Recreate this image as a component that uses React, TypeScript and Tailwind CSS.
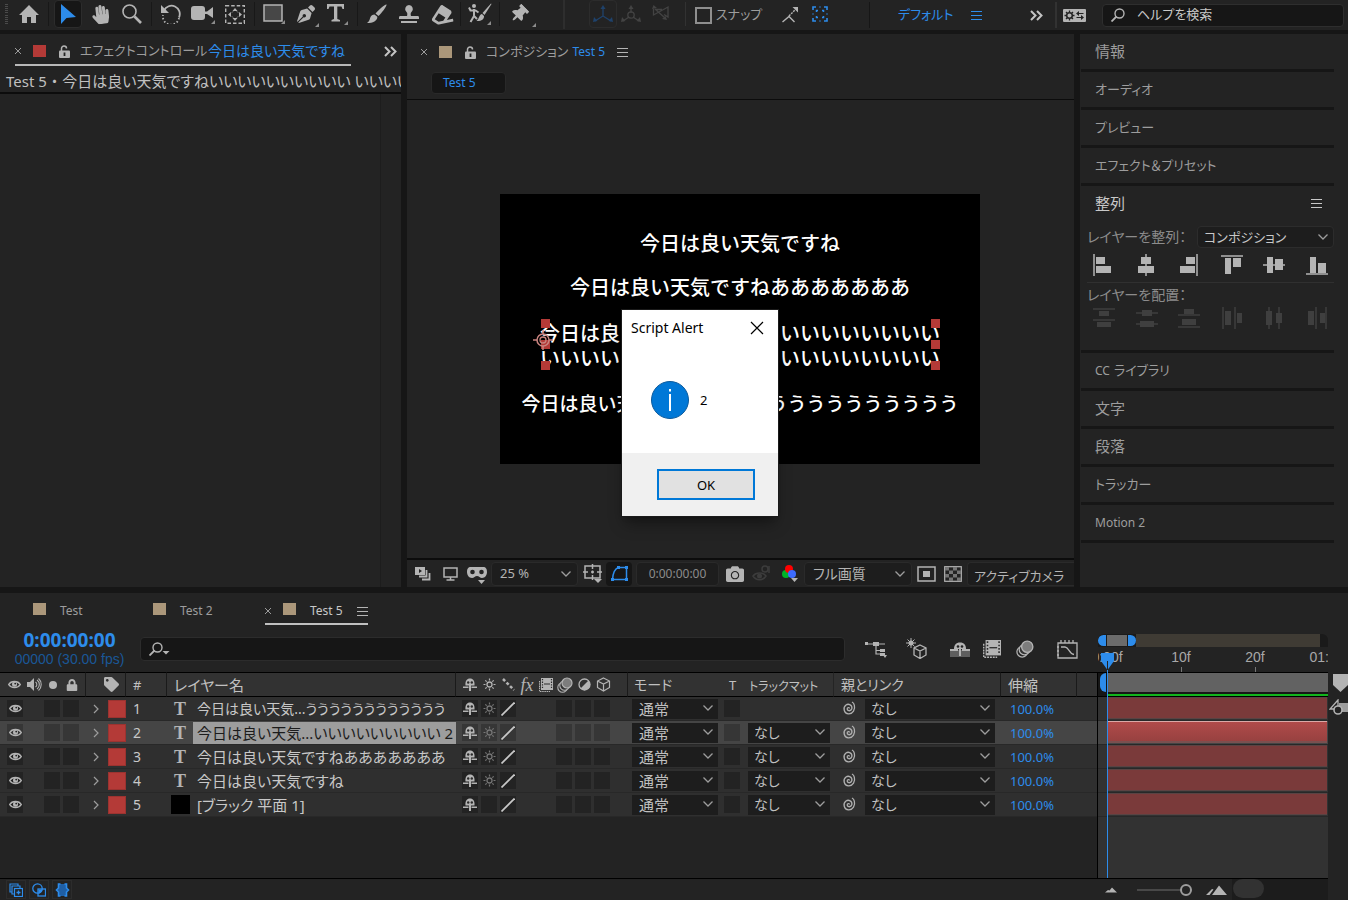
import type { ReactNode } from "react";
import {
  FaCamera,
  FaEraser,
  FaHandPaper,
  FaLock,
  FaPenNib,
  FaTag,
  FaThumbtack,
} from "react-icons/fa";

interface Layer {
  id: number;
  name: string;
  kind: "text" | "solid";
  selected?: boolean;
  compact?: boolean;
  matte: boolean;
}

const layers: Layer[] = [
  { id: 1, name: "今日は良い天気...うううううううううううう", kind: "text", compact: true, matte: false },
  { id: 2, name: "今日は良い天気...いいいいいいいいい 2", kind: "text", selected: true, matte: true },
  { id: 3, name: "今日は良い天気ですねあああああああ", kind: "text", matte: true },
  { id: 4, name: "今日は良い天気ですね", kind: "text", matte: true },
  { id: 5, name: "[ブラック 平面 1]", kind: "solid", matte: true },
];

interface SvgProps {
  w: number;
  h: number;
  className?: string;
  children: ReactNode;
}

function Svg({ w, h, className = "", children }: SvgProps) {
  return (
    <svg
      width={w}
      height={h}
      viewBox={`0 0 ${w} ${h}`}
      fill="none"
      stroke="currentColor"
      aria-hidden="true"
      className={`shrink-0 ${className}`}
    >
      {children}
    </svg>
  );
}

/* ---------- icons ---------- */

function ChevronDown({ className = "" }: { className?: string }) {
  return (
    <Svg w={12} h={8} className={className}>
      <path d="M1.5 1.5 6 6l4.500-4.500" strokeWidth="1.300" />
    </Svg>
  );
}

function MenuIcon({ className = "" }: { className?: string }) {
  return (
    <Svg w={11} h={11} className={className}>
      <path d="M0 1.500h11M0 5.500h11M0 9.500h11" />
    </Svg>
  );
}

function MoreIcon() {
  return (
    <Svg w={13} h={11} className="text-[#c4c4c4]">
      <path d="m1 1 4.500 4.500L1 10M7 1l4.500 4.500L7 10" strokeWidth="2" />
    </Svg>
  );
}

function CloseIcon() {
  return (
    <Svg w={6} h={6} className="text-[#9d9d9d]">
      <path d="m0 0 6 6M6 0 0 6" />
    </Svg>
  );
}

function UnlockIcon() {
  return (
    <Svg w={11} h={13} className="text-[#b4b4b4]">
      <path d="M2.500 6V3.500a2.500 2.500 0 0 1 5 0" strokeWidth="1.500" />
      <rect x="0" y="5.500" width="11" height="7.500" rx="1" fill="currentColor" stroke="none" />
      <path d="M5.500 7.500v3.500" stroke="#232323" strokeWidth="1.800" />
    </Svg>
  );
}

function HomeIcon() {
  return (
    <Svg w={20} h={19}>
      <path d="M10 0 0 10h3v8h5v-6h4v6h5v-8h3z" fill="currentColor" stroke="none" />
    </Svg>
  );
}

function SelectIcon() {
  return (
    <Svg w={16} h={20} className="text-[#2d8ceb]">
      <path d="M1 0v20l5.500-6L16 13z" fill="currentColor" stroke="none" />
    </Svg>
  );
}

function ZoomIcon() {
  return (
    <Svg w={20} h={20}>
      <circle cx="7.500" cy="7.500" r="6.500" strokeWidth="1.600" />
      <path d="m12.500 12.500 6.500 6.500" strokeWidth="2.600" />
    </Svg>
  );
}

function RotateIcon() {
  return (
    <Svg w={20} h={20}>
      <path d="M3 6.500a8 8 0 0 1 15 7" strokeWidth="1.800" />
      <path d="M18 14a8 8 0 0 1-16-3" strokeWidth="1.800" strokeDasharray="1.500 2" />
      <path d="M0 1v8h8z" fill="currentColor" stroke="none" />
    </Svg>
  );
}

function VideoIcon() {
  return (
    <Svg w={24} h={20}>
      <rect x="0" y="2" width="14" height="14" rx="3" fill="currentColor" stroke="none" />
      <path d="M13 7.500 16 7.500 22 3v11l-6-4h-3z" fill="currentColor" stroke="none" />
      <path d="M24 16v4h-4z" fill="#8c8c8c" stroke="none" />
    </Svg>
  );
}

function PanBehindIcon() {
  return (
    <Svg w={20} h={19}>
      <rect x="0.700" y="0.700" width="18.600" height="17.600" strokeWidth="1.400" strokeDasharray="3.500 2" />
      <path
        d="M10 3l2.500 3h-5zM10 16l2.500-3h-5zM3 9.500l3-2.500v5zM17 9.500 14 7v5z"
        fill="currentColor"
        stroke="none"
      />
      <path d="M7 7.500l1-1M13 7.500l-1-1M7 11.500l1 1M13 11.500l-1 1" />
    </Svg>
  );
}

function ShapeIcon() {
  return (
    <Svg w={22} h={20}>
      <rect x="1" y="1" width="18" height="16" fill="#474747" strokeWidth="1.500" />
      <path d="M22 16v4h-4z" fill="#8c8c8c" stroke="none" />
    </Svg>
  );
}

function PenIcon() {
  return (
    <div className="relative">
      <FaPenNib size={18} />
      <Svg w={4} h={4} className="absolute -right-1 -bottom-1 text-[#8c8c8c]">
        <path d="M4 0v4H0z" fill="currentColor" stroke="none" />
      </Svg>
    </div>
  );
}

function TypeIcon() {
  return (
    <Svg w={22} h={21}>
      <path d="M0 0h17v5h-1.500l-1-2.500h-4.200v12.500l2.700 1v1.500H4.500V16L7 15V2.500H2.500L1.500 5H0z" fill="currentColor" stroke="none" />
      <path d="M21 17v4h-4z" fill="#8c8c8c" stroke="none" />
    </Svg>
  );
}

function BrushIcon() {
  return (
    <Svg w={20} h={20}>
      <path
        d="M19.500 0.500c.8.600-4.500 8.500-8 11.500L8.500 9.500C11.500 6 18 0 19.500.5zM7.500 10.500l2.800 2.300c.3 3.500-4 6.200-10.300 6.200 2.500-1.500 2.500-3 3.200-5.200.8-2.300 2.500-3.300 4.300-3.300z"
        fill="currentColor"
        stroke="none"
      />
    </Svg>
  );
}

function StampIcon() {
  return (
    <Svg w={20} h={19}>
      <path
        d="M10 0a4 4 0 0 1 2.500 7c-1 1-1 2.500-.5 4h6.500c1 0 1.500.5 1.500 1.500V14H0v-1.500C0 11.500.5 11 1.500 11H8c.5-1.500.5-3-.5-4A4 4 0 0 1 10 0zM2 16h16v2H2z"
        fill="currentColor"
        stroke="none"
      />
    </Svg>
  );
}

function RotoIcon() {
  return (
    <Svg w={24} h={22}>
      <circle cx="6" cy="3" r="2" fill="currentColor" stroke="none" />
      <path d="M1 4.500 2.500 7.500h5l3 2M6 6v7l-3.500 6M6 13l3 3" strokeWidth="2" />
      <path d="M23 0.500 14.500 10l2 2L23.500 1zM14 11c-3 .5-2.500 4.500-5.500 7 4 .5 8-1.500 7.500-5z" fill="currentColor" stroke="none" />
      <path d="M23 18v4h-4z" fill="#8c8c8c" stroke="none" />
    </Svg>
  );
}

function PinIcon() {
  return (
    <div className="relative">
      <FaThumbtack size={18} className="rotate-45" />
      <Svg w={4} h={4} className="absolute -right-2 -bottom-1 text-[#8c8c8c]">
        <path d="M4 0v4H0z" fill="currentColor" stroke="none" />
      </Svg>
    </div>
  );
}

function LocalAxisIcon() {
  return (
    <Svg w={20} h={18} className="text-[#1f426b]">
      <path d="M10 2v9L2 16M10 11l8 5" strokeWidth="1.300" />
      <path d="M10 0l2.500 4h-5zM0 17l1-5 3.500 4zM20 17l-1-5-3.500 4z" fill="currentColor" stroke="none" />
    </Svg>
  );
}

function WorldAxisIcon() {
  return (
    <Svg w={20} h={18} className="text-[#434343]">
      <path d="M10 2v6M8 12l-6 4M12 12l6 4" strokeWidth="1.300" />
      <circle cx="10" cy="10" r="3.200" strokeWidth="1.300" />
      <path d="M10 0l2.500 4h-5zM0 17l1-5 3.500 4zM20 17l-1-5-3.500 4z" fill="currentColor" stroke="none" />
    </Svg>
  );
}

function ViewAxisIcon() {
  return (
    <Svg w={18} h={18} className="text-[#434343]">
      <path d="M1.500 4v6L16 2v10l-4-2.500M3 4l10 9M4 4.500h6" strokeWidth="1.300" />
      <path d="M0 4l1.500-4L5 3zM15 15l-1.500-4L10 14z" fill="currentColor" stroke="none" />
    </Svg>
  );
}

function SnapEdgeIcon() {
  return (
    <Svg w={17} h={17} className="text-[#b4b4b4]">
      <path d="M0.500 16 7 10.500 12.500 16" strokeWidth="1.400" />
      <path d="M7 10l6-6" strokeWidth="1.400" strokeDasharray="2 1" />
      <path d="M10.500 1H16v5.500z" fill="currentColor" stroke="none" />
    </Svg>
  );
}

function SnapBoxIcon() {
  return (
    <Svg w={16} h={16} className="text-[#2d8ceb]">
      <path d="M1 4V1h3M12 1h3v3M15 12v3h-3M4 15H1v-3" strokeWidth="1.600" />
      <path d="M4.500 6V4.500H6M10 4.500h1.500V6M11.500 10v1.500H10M6 11.500H4.500V10M7.500 1h1M7.500 15h1M1 7.500v1M15 7.500v1" strokeWidth="1.500" />
    </Svg>
  );
}

function WorkspaceIcon() {
  return (
    <Svg w={23} h={13}>
      <rect x="0" y="0" width="23" height="13" rx="1" fill="#b4b4b4" stroke="none" />
      <circle cx="6.500" cy="6.500" r="2.800" stroke="#232323" strokeWidth="1.500" />
      <path d="M6.500 1.500v2M6.500 9.500v2M1.500 6.500h2M9.500 6.500h2M3 3l1.300 1.300M8.700 8.700 10 10M10 3 8.700 4.300M3 10l1.300-1.300" stroke="#232323" strokeWidth="1.300" />
      <path d="M14 4.500h6.500M13.500 8.500H20" stroke="#232323" strokeWidth="1.200" />
      <path d="M16 2v5l-3-2.500zM18 6v5l3-2.500z" fill="#232323" stroke="none" />
    </Svg>
  );
}

function SearchIcon({ menu = false }: { menu?: boolean }) {
  return (
    <Svg w={menu ? 21 : 14} h={14} className="text-[#b4b4b4]">
      <circle cx="8.500" cy="5.500" r="4.500" strokeWidth="1.400" />
      <path d="M5.500 8.500 0.500 13.500" strokeWidth="1.800" />
      {menu && <path d="M13.500 9h7L17 12.500z" fill="currentColor" stroke="none" />}
    </Svg>
  );
}

function EyeIcon() {
  return (
    <Svg w={13} h={9}>
      <path d="M0.700 4.500C3 .5 10 .5 12.300 4.500 10 8.500 3 8.500.7 4.500z" strokeWidth="1.500" />
      <circle cx="6.500" cy="4.300" r="2.500" fill="currentColor" stroke="none" />
      <circle cx="7.200" cy="3.600" r="0.900" fill="#222" stroke="none" />
    </Svg>
  );
}

function SpeakerIcon() {
  return (
    <Svg w={15} h={13}>
      <path d="M0 4h3l4-4v13L3 9H0z" fill="currentColor" stroke="none" />
      <path d="M8.500 4a3 3 0 0 1 0 5M10 2a5.500 5.500 0 0 1 0 9M11.500.5a8 8 0 0 1 0 12" strokeWidth="1.100" />
    </Svg>
  );
}

function ShyIcon() {
  return (
    <Svg w={14} h={13}>
      <path
        d="M2.500 7.500C2 3 4 .5 7 .5s5 2.500 4.500 7zM0 8.500h5.500V10H0zM8.500 8.500H14V10H8.500zM6 7h2v6H6z"
        fill="currentColor"
        stroke="none"
      />
      <circle cx="5.200" cy="4.500" r="1.200" fill="#2a2a2a" stroke="none" />
      <circle cx="8.800" cy="4.500" r="1.200" fill="#2a2a2a" stroke="none" />
    </Svg>
  );
}

function SunIcon({ className = "" }: { className?: string }) {
  return (
    <Svg w={13} h={13} className={className}>
      <circle cx="6.500" cy="6.500" r="2.500" strokeWidth="1.300" />
      <path d="M6.500 0.500v2M6.500 10.500v2M.5 6.500h2M10.500 6.500h2M2.300 2.300l1.400 1.400M9.300 9.300l1.400 1.400M10.700 2.300 9.300 3.700M2.300 10.700l1.400-1.400" strokeWidth="1.200" />
    </Svg>
  );
}

function QualityIcon() {
  return (
    <Svg w={14} h={14} className="text-[#c8c8c8]">
      <path d="M0.500 13.500l13-13" strokeWidth="1.700" />
    </Svg>
  );
}

function FilmIcon({ size = 14 }: { size?: number }) {
  return (
    <svg width={size} height={size} viewBox="0 0 14 14" fill="none" stroke="currentColor" aria-hidden="true" className="shrink-0">
      <path d="M0.500 3v10.500H11" strokeWidth="1.200" strokeDasharray="1.500 .7" />
      <rect x="2" y="0" width="12" height="12" fill="currentColor" stroke="none" />
      <path d="M3.500 1v10M12.500 1v10" stroke="#2a2a2a" strokeWidth="1.200" strokeDasharray="1.300 1.300" />
      <path d="M5 6h6" stroke="#2a2a2a" />
    </svg>
  );
}

function BlurIcon({ size = 16 }: { size?: number }) {
  return (
    <svg width={size} height={size} viewBox="0 0 16 16" fill="none" stroke="currentColor" aria-hidden="true" className="shrink-0">
      <circle cx="5.500" cy="10.500" r="4.700" strokeWidth="1.100" />
      <circle cx="7.500" cy="8.500" r="4.700" fill="#333" strokeWidth="1.100" />
      <circle cx="10" cy="6" r="5" fill="#7d7d7d" strokeWidth="1.200" />
    </svg>
  );
}

function AdjustIcon() {
  return (
    <Svg w={13} h={13}>
      <circle cx="6.500" cy="6.500" r="5.500" strokeWidth="1.300" />
      <path d="M10.500 2.500a5.600 5.600 0 0 1-8 8z" fill="currentColor" stroke="none" />
    </Svg>
  );
}

function CubeIcon() {
  return (
    <Svg w={15} h={15}>
      <path d="M7.500 1 13.500 4v6.500l-6 3.500-6-3.500V4zM1.500 4l6 3 6-3M7.500 7v7" strokeWidth="1.200" />
    </Svg>
  );
}

function SpiralIcon() {
  return (
    <Svg w={15} h={15} className="text-[#b0b0b0]">
      <path
        d="M8.500 7.500c0-1.500-2.500-1-2.300.7.200 2 3.800 2.300 4.600-.4C11.700 4 7.500 2.300 5 4 1.500 6.500 3 12.500 7.500 12.800c4.500.2 7-4.300 5.800-8.800C13 2.500 12 1.500 11 1"
        strokeWidth="1.300"
      />
    </Svg>
  );
}

function MountainIcon({ big = false }: { big?: boolean }) {
  return big ? (
    <Svg w={21} h={10} className="text-[#b4b4b4]">
      <path d="M6 10 13 0.500 21 10zM0 10l6-6 1.500.5L3.500 10z" fill="currentColor" stroke="none" />
    </Svg>
  ) : (
    <Svg w={12} h={6} className="text-[#b4b4b4]">
      <path d="M0 5.500 3 3l1.500.5L7 .5l5 5z" fill="currentColor" stroke="none" />
    </Svg>
  );
}

/* ---------- top tool bar ---------- */

function Tool({ label, children, className = "w-8" }: { label: string; children: ReactNode; className?: string }) {
  return (
    <button type="button" aria-label={label} className={`flex h-7 shrink-0 items-center justify-center text-[#b4b4b4] ${className}`}>
      {children}
    </button>
  );
}

function Divider() {
  return <div className="mx-[3px] h-6 w-px shrink-0 bg-[#181818]" />;
}

function TopBar() {
  return (
    <header className="flex h-[30px] shrink-0 items-center overflow-hidden bg-[#232323] pb-[2px]">
      <div className="mr-[5px] ml-[5px] flex h-5 w-[3px] shrink-0 flex-col justify-between">
        {Array.from({ length: 10 }, (_, i) => (
          <div key={i} className="h-px bg-[#4a4a4a]" />
        ))}
      </div>
      <Tool label="ホーム"><HomeIcon /></Tool>
      <Divider />
      <button type="button" aria-label="選択" className="mx-[2px] flex h-7 w-7 shrink-0 items-center justify-center rounded border border-[#2c2c2c] bg-[#161616]">
        <SelectIcon />
      </button>
      <Tool label="手のひら"><FaHandPaper size={19} className="-rotate-6" /></Tool>
      <Tool label="ズーム"><ZoomIcon /></Tool>
      <Divider />
      <Tool label="回転"><RotateIcon /></Tool>
      <Tool label="カメラ"><VideoIcon /></Tool>
      <Tool label="アンカーポイント"><PanBehindIcon /></Tool>
      <Divider />
      <Tool label="長方形"><ShapeIcon /></Tool>
      <Tool label="ペン"><PenIcon /></Tool>
      <Tool label="横書き文字"><TypeIcon /></Tool>
      <Divider />
      <Tool label="ブラシ"><BrushIcon /></Tool>
      <Tool label="コピースタンプ"><StampIcon /></Tool>
      <Tool label="消しゴム"><FaEraser size={21} className="-rotate-12" /></Tool>
      <Divider />
      <Tool label="ロトブラシ"><RotoIcon /></Tool>
      <Divider />
      <Tool label="パペットピン"><PinIcon /></Tool>
      <div className="mr-6 ml-7 h-[30px] w-[2px] shrink-0 bg-[#2e2e2e]" />
      <Tool label="ローカル軸" className="w-7 rounded border border-[#2c2c2c]"><LocalAxisIcon /></Tool>
      <Tool label="ワールド軸" className="w-7"><WorldAxisIcon /></Tool>
      <Tool label="ビュー軸" className="w-8"><ViewAxisIcon /></Tool>
      <div className="mr-[9px] ml-2 h-6 w-px shrink-0 bg-[#323232]" />
      <label className="flex shrink-0 items-center gap-1 pt-[2px] text-[13px] text-[#9d9d9d]">
        <input type="checkbox" className="h-[17px] w-[17px] appearance-none border-2 border-[#8f8f8f]" />
        スナップ
      </label>
      <Tool label="エッジにスナップ" className="ml-3 w-8"><SnapEdgeIcon /></Tool>
      <Tool label="グリッドにスナップ" className="w-7"><SnapBoxIcon /></Tool>

      <div className="ml-auto flex h-full shrink-0 items-center pt-[2px]">
        <div className="h-full w-px bg-[#161616]" />
        <a href="#workspace" className="ml-7 w-[73px] text-[13px] text-[#2d8ceb]">デフォルト</a>
        <button type="button" aria-label="ワークスペースメニュー" className="text-[#2d8ceb]"><MenuIcon /></button>
        <button type="button" aria-label="その他" className="ml-12"><MoreIcon /></button>
        <div className="ml-3 h-full w-[2px] bg-[#323232]" />
        <button type="button" aria-label="ワークスペース設定" className="ml-[6px]"><WorkspaceIcon /></button>
        <label className="mr-1 ml-4 flex h-[23px] w-[242px] items-center rounded border border-[#2e2e2e] bg-[#161616] pl-2">
          <SearchIcon />
          <input
            type="text"
            aria-label="ヘルプを検索"
            placeholder="ヘルプを検索"
            className="ml-3 w-full bg-transparent text-[13px] text-[#c8c8c8] outline-none placeholder:text-[#c8c8c8]"
          />
        </label>
      </div>
    </header>
  );
}

/* ---------- left: effect controls ---------- */

function EffectControls() {
  return (
    <section className="flex w-[401px] shrink-0 flex-col bg-[#232323]">
      <div className="flex h-8 items-end justify-between pr-1 pl-[15px]">
        <div className="flex h-full w-[336px] items-center overflow-hidden border-b-2 border-[#b8b8b8] pt-1 text-[13px] whitespace-nowrap text-[#9d9d9d]">
          <button type="button" aria-label="閉じる"><CloseIcon /></button>
          <div className="mr-[13px] ml-3 h-3 w-[13px] shrink-0 bg-[#b43a37]" />
          <UnlockIcon />
          <h2 className="ml-[10px] flex items-center">
            <span className="w-32">エフェクトコントロール</span>
            <span className="text-sm text-[#2d8ceb]">今日は良い天気ですね</span>
          </h2>
        </div>
        <button type="button" aria-label="その他" className="mb-[9px]"><MoreIcon /></button>
      </div>
      <p className="h-7 overflow-hidden border-b-2 border-[#0c0c0c] pt-px pl-[6px] text-[15px] leading-7 whitespace-nowrap text-[#c0c0c0]">
        Test 5<span className="px-1">・</span>今日は良い天気ですねいいいいいいいいいい いいいい
      </p>
      <div className="mr-5 flex-1 border-r border-[#1d1d1d]" />
    </section>
  );
}

/* ---------- centre: composition viewer ---------- */

function Handle({ className }: { className: string }) {
  return <div className={`absolute h-[9px] w-[9px] bg-[#b43a37] ${className}`} />;
}

function ScriptAlert() {
  return (
    <div
      role="dialog"
      aria-labelledby="alert-title"
      className="absolute top-[116px] left-[122px] flex h-[206px] w-[156px] flex-col bg-white font-normal text-black shadow-lg ring-1 shadow-black/40 ring-[#1a1a1a]"
    >
      <div className="flex h-9 items-center justify-between pr-[14px] pl-[9px]">
        <h2 id="alert-title" className="text-sm">Script Alert</h2>
        <button type="button" aria-label="閉じる">
          <Svg w={14} h={14}>
            <path d="m1 1 12 12M13 1 1 13" strokeWidth="1.200" />
          </Svg>
        </button>
      </div>
      <div className="flex flex-1 items-center gap-[11px] pl-[29px] text-[13px]">
        <Svg w={38} h={38}>
          <circle cx="19" cy="19" r="18.500" fill="#0078d7" stroke="#0b5a9c" />
          <path d="M19 13v17M19 8v2.500" stroke="#fff" strokeWidth="2" />
        </Svg>
        <p>2</p>
      </div>
      <div className="flex h-[63px] items-center justify-end bg-[#f0f0f0] pr-[23px]">
        <button type="button" className="h-[31px] w-[98px] border-2 border-[#0078d7] bg-[#e1e1e1] text-[13px]">OK</button>
      </div>
    </div>
  );
}

function Canvas() {
  return (
    <div className="relative h-[270px] w-[480px] shrink-0 bg-black text-center text-xl leading-[26px] font-medium whitespace-nowrap text-white [font-feature-settings:normal]">
      <p className="pt-[37px]">今日は良い天気ですね</p>
      <p className="pt-[18px]">今日は良い天気ですねあああああああ</p>
      <p className="pt-5 leading-[25px]">
        今日は良い天気ですねいいいいいいいいいい
        <br />
        いいいいいいいいいいいいいいいいいいいい
      </p>
      <p className="pt-5 text-[19px]">今日は良い天気ですねううううううううううううう</p>

      <Handle className="top-[125px] left-[41px]" />
      <Handle className="top-[146px] left-[41px]" />
      <Handle className="top-[167px] left-[41px]" />
      <Handle className="top-[125px] left-[431px]" />
      <Handle className="top-[146px] left-[431px]" />
      <Handle className="top-[167px] left-[431px]" />
      <Svg w={20} h={20} className="absolute top-[136px] left-[33px] text-[#c9837f]">
        <circle cx="10" cy="10" r="6" strokeWidth="1.500" />
        <circle cx="10" cy="10" r="3" strokeWidth="1.300" />
        <path d="M0 10h4M16 10h4M10 0v4M10 16v4" strokeWidth="1.500" />
      </Svg>

      <ScriptAlert />
    </div>
  );
}

interface PickerProps {
  label: string;
  value: string;
  className?: string;
  chevron?: string;
}

function Picker({ label, value, className = "", chevron = "right-[4px]" }: PickerProps) {
  return (
    <div className={`relative flex items-center bg-[#1d1d1d] ${className}`}>
      <select aria-label={label} className="h-full w-full appearance-none bg-transparent outline-none">
        <option>{value}</option>
      </select>
      <ChevronDown className={`pointer-events-none absolute text-[#9d9d9d] ${chevron}`} />
    </div>
  );
}

function ViewerFooter() {
  return (
    <div className="flex h-[29px] items-center overflow-hidden border-t-2 border-[#0c0c0c] pl-2 text-[#b4b4b4]">
      <button type="button" aria-label="常にプレビュー" className="w-7">
        <Svg w={16} h={14}>
          <rect x="0" y="0" width="10" height="8" fill="currentColor" stroke="none" />
          <path d="M4 2v4l3-2z" fill="#222" stroke="none" />
          <path d="M11.500 3v6.500H4M14.500 6v6.500H7" strokeWidth="1.800" />
        </Svg>
      </button>
      <button type="button" aria-label="プライマリビューア" className="w-6">
        <Svg w={15} h={14}>
          <rect x="1" y="1" width="13" height="9" strokeWidth="1.500" />
          <path d="M7.500 10v2.500M3.500 13h8" strokeWidth="1.500" />
        </Svg>
      </button>
      <button type="button" aria-label="VR" className="w-6 pt-[2px]">
        <Svg w={20} h={18}>
          <path d="M4 1h12c3 0 4 2 4 5s-2 6-5 6c-2 0-3-2-5-2s-3 2-5 2c-3 0-5-3-5-6s1-5 4-5z" fill="currentColor" stroke="none" />
          <circle cx="5.500" cy="6" r="2.300" fill="#222" stroke="none" />
          <circle cx="14.500" cy="6" r="2.300" fill="#222" stroke="none" />
          <path d="M11 14h7l-3.500 4z" fill="currentColor" stroke="none" />
        </Svg>
      </button>
      <Picker label="拡大率" value="25 %" chevron="right-[5px]" className="h-6 w-[87px] rounded border border-[#2a2a2a] pl-2 text-[13px]" />
      <button type="button" aria-label="グリッド" className="mr-1 ml-[5px]">
        <Svg w={19} h={19}>
          <rect x="2" y="2" width="15" height="12" strokeWidth="1.500" />
          <path d="M9.500 0v5M9.500 11v5M0 8h5M14 8h5M8 8h3M9.500 6.500v3" strokeWidth="1.500" />
          <path d="M11 15h8l-4 4z" fill="currentColor" stroke="none" />
        </Svg>
      </button>
      <button type="button" aria-label="マスクの表示" className="flex h-6 w-[26px] shrink-0 items-center justify-center rounded bg-[#161616] text-[#2d8ceb]">
        <Svg w={19} h={17}>
          <path d="M2.500 14.500h14v-12h-8c-3 1-5.500 5-6 12z" strokeWidth="1.500" />
          <path d="M1 13h3v3H1zM15 13h3v3h-3zM15 1h3v3h-3zM7 1h3v3H7z" fill="currentColor" stroke="none" />
        </Svg>
      </button>
      <button type="button" className="ml-1 h-6 w-[83px] shrink-0 rounded border border-[#2a2a2a] bg-[#1d1d1d] text-xs text-[#8c8c8c]">0:00:00:00</button>
      <button type="button" aria-label="スナップショット" className="ml-[7px]"><FaCamera size={18} /></button>
      <button type="button" aria-label="スナップショットを表示" className="ml-2 text-[#3c3c3c]">
        <Svg w={20} h={17}>
          <path d="M1 11c3-4 10-4 13 0-3 5-10 5-13 0z" strokeWidth="1.500" />
          <circle cx="7.500" cy="11" r="2.500" fill="currentColor" stroke="none" />
          <circle cx="13" cy="4" r="3" strokeWidth="1.500" />
          <path d="M17 1v7" strokeWidth="1.500" />
        </Svg>
      </button>
      <button type="button" aria-label="チャンネル" className="ml-[9px]">
        <Svg w={17} h={19}>
          <circle cx="5" cy="10" r="4" fill="#00b428" stroke="none" />
          <circle cx="8" cy="5" r="4" fill="#ff0000" stroke="none" />
          <circle cx="11" cy="10" r="4" fill="#3d6cff" stroke="none" />
          <path d="M10 14h7l-3.500 4z" fill="currentColor" stroke="none" />
        </Svg>
      </button>
      <Picker label="解像度" value="フル画質" chevron="right-[5px]" className="ml-[6px] h-6 w-[108px] rounded border border-[#2a2a2a] pl-2 text-sm" />
      <button type="button" aria-label="目標範囲" className="ml-[5px]">
        <Svg w={19} h={16}>
          <rect x="1" y="1" width="17" height="14" strokeWidth="1.500" />
          <rect x="6" y="5" width="7" height="6" fill="currentColor" stroke="none" />
        </Svg>
      </button>
      <button type="button" aria-label="透明グリッド" className="ml-2">
        <Svg w={18} h={16}>
          <rect x="0.700" y="0.700" width="16.600" height="14.600" strokeWidth="1.200" />
          <path d="M1 1h4v3.500H1zM9 1h4v3.500H9zM5 4.500h4V8H5zM13 4.500h4V8h-4zM1 8h4v3.500H1zM9 8h4v3.500H9zM5 11.500h4V15H5zM13 11.500h4V15h-4z" fill="#757575" stroke="none" />
        </Svg>
      </button>
      <div className="ml-[5px] h-6 flex-1 overflow-hidden rounded-l border border-r-0 border-[#2a2a2a] bg-[#1d1d1d]">
        <select aria-label="3D ビュー" className="h-full appearance-none bg-transparent pl-[6px] text-[13px] outline-none">
          <option>アクティブカメラ</option>
        </select>
      </div>
    </div>
  );
}

function Viewer() {
  return (
    <section className="flex min-w-0 flex-1 flex-col bg-[#232323]">
      <div className="flex h-9 items-center pl-[14px] text-[13px] text-[#9d9d9d]">
        <button type="button" aria-label="閉じる"><CloseIcon /></button>
        <div className="mr-[13px] ml-3 h-3 w-[13px] bg-[#ab977a]" />
        <UnlockIcon />
        <h2 className="ml-[10px] flex items-center gap-1">
          コンポジション
          <span className="text-xs text-[#2d8ceb]">Test 5</span>
        </h2>
        <button type="button" aria-label="パネルメニュー" className="ml-3 text-[#b4b4b4]"><MenuIcon /></button>
      </div>
      <div className="flex h-[30px] items-start border-b border-[#0c0c0c] pt-[2px] pl-6">
        <button type="button" className="h-[22px] w-[75px] rounded border border-[#292929] bg-[#161616] pl-[11px] text-left text-xs leading-5 text-[#2d8ceb]">
          Test 5
        </button>
      </div>
      <div className="flex flex-1 items-center justify-center pr-px">
        <Canvas />
      </div>
      <ViewerFooter />
    </section>
  );
}

/* ---------- right: panel stack ---------- */

function PanelTitle({ children, size = "text-[13px]" }: { children: ReactNode; size?: string }) {
  return (
    <h2 className={`flex h-[38px] items-center border-b-[3px] border-[#161616] pl-[14px] text-[#9d9d9d] ${size}`}>
      {children}
    </h2>
  );
}

const alignIcons = [
  { label: "左揃え", line: "M1 0v22", bars: "M3 3h9v7H3zM3 12h15v7H3z" },
  { label: "水平方向に整列", line: "M10 0v22", bars: "M5 3h10v7H5zM2 12h16v7H2z" },
  { label: "右揃え", line: "M19 0v22", bars: "M8 3h9v7H8zM2 12h15v7H2z" },
  { label: "上揃え", line: "M0 2h22", bars: "M4 4h6v16H4zM12 4h8v9h-8z" },
  { label: "垂直方向に整列", line: "M0 11h22", bars: "M4 3h6v16H4zM12 5h8v11h-8z" },
  { label: "下揃え", line: "M0 20h22", bars: "M4 3h6v16H4zM12 9h8v10h-8z" },
];

const distributeIcons = [
  { label: "上端分布", line: "M0 2h22M0 13h22", bars: "M6 4h10v5H6zM4 15h14v5H4z" },
  { label: "垂直中央分布", line: "M0 6h22M0 17h22", bars: "M6 3h10v6H6zM4 14h14v6H4z" },
  { label: "下端分布", line: "M0 8h22M0 20h22", bars: "M6 2h10v5H6zM4 12h14v6H4z" },
  { label: "左端分布", line: "M2 0v22M14 0v22", bars: "M4 4h6v14H4zM16 6h5v10h-5z" },
  { label: "水平中央分布", line: "M6 0v22M16 0v22", bars: "M3 4h6v14H3zM13 6h6v10h-6z" },
  { label: "右端分布", line: "M10 0v22M20 0v22", bars: "M2 4h6v14H2zM14 6h5v10h-5z" },
];

function AlignPanel() {
  return (
    <section className="h-[167px] border-b-[3px] border-[#161616] text-sm text-[#8c8c8c]">
      <div className="flex h-9 items-center justify-between pr-3 pb-px pl-[14px] text-[15px] text-[#c8c8c8]">
        <h2>整列</h2>
        <button type="button" aria-label="パネルメニュー"><MenuIcon /></button>
      </div>
      <div className="flex items-center justify-between pt-1 pl-[6px]">
        <span>レイヤーを整列：</span>
        <Picker label="レイヤーを整列" value="コンポジション" chevron="right-[4px]" className="h-[22px] w-[137px] rounded border border-[#2c2c2c] pl-[6px] text-[13px] text-[#c8c8c8]" />
      </div>
      <div className="mt-[6px] flex justify-between pr-[6px] pl-3 text-[#b4b4b4]">
        {alignIcons.map((icon) => (
          <button type="button" key={icon.label} aria-label={icon.label}>
            <Svg w={22} h={22}>
              <path d={icon.line} strokeWidth="1.500" />
              <path d={icon.bars} fill="currentColor" stroke="none" />
            </Svg>
          </button>
        ))}
      </div>
      <div className="mt-[6px] ml-[6px] h-px bg-[#303030]" />
      <p className="pl-[6px] leading-6">レイヤーを配置：</p>
      <div className="flex justify-between pr-[6px] pl-3 text-[#3f3f3f]">
        {distributeIcons.map((icon) => (
          <button type="button" key={icon.label} aria-label={icon.label}>
            <Svg w={22} h={22}>
              <path d={icon.line} strokeWidth="1.500" />
              <path d={icon.bars} fill="currentColor" stroke="none" />
            </Svg>
          </button>
        ))}
      </div>
    </section>
  );
}

function SidePanels() {
  return (
    <aside className="w-[268px] shrink-0 bg-[#232323] pr-[14px] pl-px">
      <PanelTitle size="text-[15px]">情報</PanelTitle>
      <PanelTitle>オーディオ</PanelTitle>
      <PanelTitle>プレビュー</PanelTitle>
      <PanelTitle>エフェクト＆プリセット</PanelTitle>
      <AlignPanel />
      <PanelTitle><span className="mr-1 text-xs">CC</span>ライブラリ</PanelTitle>
      <PanelTitle size="text-[15px]">文字</PanelTitle>
      <PanelTitle size="text-[15px]">段落</PanelTitle>
      <PanelTitle>トラッカー</PanelTitle>
      <PanelTitle size="text-xs">Motion 2</PanelTitle>
    </aside>
  );
}

/* ---------- bottom: timeline ---------- */

function TimelineTabs() {
  return (
    <div role="tablist" className="flex h-8 items-stretch pl-[33px] text-xs text-[#9d9d9d]">
      <button type="button" role="tab" aria-selected="false" className="flex w-[120px] items-center gap-[14px] pt-1">
        <span className="mb-1 h-3 w-[13px] bg-[#ab977a]" />
        Test
      </button>
      <button type="button" role="tab" aria-selected="false" className="flex w-28 items-center gap-[14px] pt-1">
        <span className="mb-1 h-3 w-[13px] bg-[#ab977a]" />
        Test 2
      </button>
      <div className="flex w-[103px] items-center border-b-2 border-[#c0c0c0] pt-[6px]">
        <button type="button" aria-label="閉じる"><CloseIcon /></button>
        <button type="button" role="tab" aria-selected="true" className="ml-3 flex items-center gap-[14px] text-[#c8c8c8]">
          <span className="mb-1 h-3 w-[13px] bg-[#ab977a]" />
          Test 5
        </button>
        <button type="button" aria-label="パネルメニュー" className="ml-auto text-[#b4b4b4]"><MenuIcon /></button>
      </div>
    </div>
  );
}

function TimelineToolbar() {
  return (
    <div className="flex h-[47px] items-center">
      <div className="w-[139px] shrink-0 text-center text-[#2d8ceb]">
        <div className="text-[19px] leading-5 font-bold">0:00:00:00</div>
        <div className="font-['Liberation_Sans',sans-serif] text-sm leading-[18px] text-[#1a5797]">00000 (30.00 fps)</div>
      </div>
      <label className="ml-px flex h-6 flex-1 items-center rounded border border-[#2c2c2c] bg-[#161616] pl-2">
        <SearchIcon menu />
        <input type="text" aria-label="レイヤーを検索" className="w-full bg-transparent pl-2 text-sm text-[#c8c8c8] outline-none" />
      </label>
      <div className="flex w-[252px] shrink-0 items-center text-[#b4b4b4]">
        <button type="button" aria-label="ミニフローチャート" className="ml-5 w-[41px]">
          <Svg w={22} h={18}>
            <path d="M2 4h18M11 4v6.500h6M11 10v4h6" strokeWidth="1.200" />
            <path d="M0 2h3v3H0zM8 2h6v4H8zM15 9h5v3h-5zM15 13h5v3h-5zM18 15h4l-2 3z" fill="currentColor" stroke="none" />
          </Svg>
        </button>
        <button type="button" aria-label="ドラフト 3D" className="w-11">
          <Svg w={21} h={21}>
            <path d="M5 0v10M0 5h10M1.500 1.500l7 7M8.500 1.500l-7 7" />
            <circle cx="5" cy="5" r="2.500" fill="currentColor" stroke="none" />
            <path d="M14 7l6 3v7l-6 3.500-6-3.500v-7zM8 10l6 3 6-3M14 13v7" strokeWidth="1.300" />
          </Svg>
        </button>
        <button type="button" aria-label="シャイ" className="w-[33px]">
          <Svg w={20} h={18}>
            <path d="M0 10h20v7H0z" fill="#5f5f5f" stroke="none" />
            <path d="M4 9C4 5 6 2.500 10 2.500S16 5 16 9zM0 9h8v2H0zM12 9h8v2h-8zM9 8h2v8H9z" fill="currentColor" stroke="none" />
            <circle cx="8" cy="6.500" r="1.300" fill="#232323" stroke="none" />
            <circle cx="12" cy="6.500" r="1.300" fill="#232323" stroke="none" />
          </Svg>
        </button>
        <button type="button" aria-label="フレームブレンド" className="w-[33px]"><FilmIcon size={18} /></button>
        <button type="button" aria-label="モーションブラー" className="w-[41px]"><BlurIcon size={18} /></button>
        <button type="button" aria-label="グラフエディター">
          <Svg w={21} h={20}>
            <path d="M1 4v15h19V4zM4 1v3M8 1v3M12 1v3M16 1v3M0 8h2M0 12h2M0 16h2" strokeWidth="1.300" />
            <path d="M4 8h4c4 0 4 7 9 7.500" strokeWidth="1.300" />
          </Svg>
        </button>
      </div>
    </div>
  );
}

function Box({ selected, children }: { selected?: boolean; children?: ReactNode }) {
  return (
    <span className={`flex h-[17px] w-4 shrink-0 items-center justify-center ${selected ? "bg-[#363636]" : "bg-[#232323]"}`}>
      {children}
    </span>
  );
}

function LayerRow({ layer }: { layer: Layer }) {
  const selected = layer.selected;
  return (
    <tr className={`h-6 *:border-b *:border-[#282828] *:p-0 ${selected ? "bg-[#454545]" : "bg-[#2f2f2f]"}`}>
      <td>
        <div className="flex items-center gap-[3px] pl-[7px] text-[#b4b4b4]">
          <Box selected={selected}><EyeIcon /></Box>
          <span className="w-[15px]" />
          <Box selected={selected} />
          <Box selected={selected} />
        </div>
      </td>
      <td>
        <div className="flex items-center justify-between pl-[7px]">
          <button type="button" aria-label="展開">
            <Svg w={6} h={10} className="text-[#9d9d9d]">
              <path d="M1 1l4 4-4 4" strokeWidth="1.200" />
            </Svg>
          </button>
          <span className="h-[18px] w-[18px] border border-[#9c3330] bg-[#b43a37]" />
        </div>
      </td>
      <td className="text-sm text-[#c8c8c8]"><span className="pl-[7px]">{layer.id}</span></td>
      <td>
        <div className="flex h-[23px] items-center text-[#b4b4b4]">
          {layer.kind === "text" ? (
            <span className="w-[26px] shrink-0 pl-[7px] font-['Liberation_Serif',serif] text-lg leading-5 font-bold">T</span>
          ) : (
            <span className="mr-[3px] ml-1 h-[19px] w-[19px] shrink-0 bg-black" />
          )}
          <span
            className={`h-[22px] flex-1 pl-1 leading-[22px] whitespace-nowrap ${layer.compact ? "text-sm" : "text-[15px]"} ${
              selected ? "bg-[#9d9d9d] text-[#1c1c1c]" : "text-[#c8c8c8]"
            }`}
          >
            {layer.name}
          </span>
        </div>
      </td>
      <td>
        <div className="flex items-center gap-[3px] pl-[6px] text-[#b4b4b4]">
          <Box selected={selected}><ShyIcon /></Box>
          <Box selected={selected}>{layer.kind === "text" && <SunIcon className="text-[#757575]" />}</Box>
          <Box selected={selected}><QualityIcon /></Box>
          <span className="w-[34px]" />
          <Box selected={selected} />
          <Box selected={selected} />
          <Box selected={selected} />
        </div>
      </td>
      <td><Picker label="モード" value="通常" className="mr-[2px] ml-1 h-5 pb-[2px] pl-[7px]" /></td>
      <td><div className="pl-1"><Box selected={selected} /></div></td>
      <td>{layer.matte && <Picker label="トラックマット" value="なし" className="mr-1 ml-[3px] h-5 pb-[2px] pl-[6px] text-sm" />}</td>
      <td><div className="pl-[7px]"><SpiralIcon /></div></td>
      <td><Picker label="親とリンク" value="なし" className="mr-[6px] ml-[2px] h-5 pb-[2px] pl-[6px] text-sm" /></td>
      <td><a href="#stretch" className="pl-[9px] text-[13px] text-[#2d8ceb]">100.0%</a></td>
      <td />
    </tr>
  );
}

function LayerTable() {
  return (
    <table className="w-full table-fixed border-separate border-spacing-0 text-[15px] leading-5 text-[#c0c0c0]">
      <colgroup>
        <col className="w-[86px]" />
        <col className="w-10" />
        <col className="w-[41px]" />
        <col className="w-[289px]" />
        <col className="w-[172px]" />
        <col className="w-[92px]" />
        <col className="w-[25px]" />
        <col className="w-[89px]" />
        <col className="w-[29px]" />
        <col className="w-[138px]" />
        <col className="w-[76px]" />
        <col />
      </colgroup>
      <thead>
        <tr className="h-[25px] bg-[#323232] text-left whitespace-nowrap *:border-y *:border-y-black *:p-0 *:font-normal">
          <th className="border-r border-r-[#1a1a1a]">
            <div className="flex items-center pl-2 text-[#b4b4b4]">
              <EyeIcon />
              <span className="ml-[6px]"><SpeakerIcon /></span>
              <span className="mr-[9px] ml-[7px] h-2 w-2 rounded-full bg-[#b4b4b4]" />
              <FaLock size={12} />
            </div>
          </th>
          <th className="border-r border-r-[#1a1a1a]">
            <FaTag size={15} className="ml-[18px] text-[#b4b4b4]" />
          </th>
          <th className="border-r border-r-[#1a1a1a]"><span className="pl-[7px] text-[13px]">#</span></th>
          <th className="border-r border-r-[#1a1a1a]"><span className="pl-[7px]">レイヤー名</span></th>
          <th className="border-r border-r-[#1a1a1a]">
            <div className="flex items-center gap-[3px] pl-[6px] text-[#b4b4b4] *:flex *:w-4 *:shrink-0 *:justify-center">
              <span><ShyIcon /></span>
              <span><SunIcon /></span>
              <span>
                <Svg w={13} h={13}>
                  <path d="M1 1l11 11" strokeWidth="2.500" strokeDasharray="3 2" />
                </Svg>
              </span>
              <span className="font-['Liberation_Serif',serif] text-lg leading-5 italic">fx</span>
              <span><FilmIcon /></span>
              <span><BlurIcon /></span>
              <span><AdjustIcon /></span>
              <span><CubeIcon /></span>
            </div>
          </th>
          <th><span className="pl-[6px] text-sm">モード</span></th>
          <th><span className="pl-[9px] text-[13px]">T</span></th>
          <th className="border-r border-r-[#242424]"><span className="pl-1 text-xs">トラックマット</span></th>
          <th colSpan={2} className="border-r border-r-[#1a1a1a]"><span className="pl-[7px] text-sm">親とリンク</span></th>
          <th className="border-r border-r-[#1a1a1a]"><span className="pl-[7px]">伸縮</span></th>
          <th />
        </tr>
      </thead>
      <tbody>
        {layers.map((layer) => (
          <LayerRow key={layer.id} layer={layer} />
        ))}
      </tbody>
    </table>
  );
}

function LayerFooter() {
  return (
    <div className="flex h-[22px] shrink-0 items-center gap-[3px] border-t border-black pl-[6px] text-[#2d8ceb] *:flex *:h-[19px] *:w-5 *:items-center *:justify-center *:border *:border-[#2c2c2c]">
      <button type="button" aria-label="レイヤースイッチ">
        <Svg w={14} h={14}>
          <path d="M3 9H1V1h8v2M5 11H3V3h8v2" strokeWidth="1.200" />
          <rect x="5.500" y="5.500" width="8" height="8" strokeWidth="1.200" />
          <path d="M9.500 7.500v4M7.500 9.500h4" strokeWidth="1.400" />
        </Svg>
      </button>
      <button type="button" aria-label="転送制御">
        <Svg w={14} h={14}>
          <circle cx="5.500" cy="5.500" r="4.700" strokeWidth="1.300" />
          <rect x="6" y="6" width="7.500" height="7" strokeWidth="1.300" />
          <path d="M6.500 6.500h4c0 2-2 4-4 4z" fill="currentColor" stroke="none" />
        </Svg>
      </button>
      <button type="button" aria-label="イン/アウト/デュレーション">
        <Svg w={15} h={14}>
          <path d="M4 1h7v4l2 2-2 2v4H4V9L2 7l2-2z" fill="#1f5fa5" stroke="none" />
          <path d="M5.500 1H3.500V5L1.500 7l2 2v4h2M9.500 1h2V5l2 2-2 2v4h-2" strokeWidth="1.600" />
        </Svg>
      </button>
    </div>
  );
}

function TimeGraph() {
  return (
    <div className="flex w-[251px] shrink-0">
      <div className="relative flex min-w-0 flex-1 flex-col pt-[9px]">
        <div className="ml-px flex h-[13px] items-center overflow-hidden rounded-t-md bg-[#1a1a1a] pr-2">
          <span className="h-[11px] w-2 rounded-l-full bg-[#2d8ceb]" />
          <span className="mx-px h-[11px] w-[20px] bg-[#6b6b6b]" />
          <span className="h-[11px] w-2 rounded-r-full bg-[#2d8ceb]" />
          <span className="h-full flex-1 bg-[#3f3b34]" />
        </div>
        <div className="ml-px flex h-[25px] overflow-hidden font-['Liberation_Sans',sans-serif] text-sm text-[#a8a8a8]">
          <div className="-ml-7 flex shrink-0">
            {["0:00f", "10f", "20f", "01:00f"].map((mark) => (
              <div key={mark} className="flex w-[74px] flex-col items-center justify-between">
                <span className="leading-5">{mark}</span>
                <span className="h-[5px] w-px bg-[#757575]" />
              </div>
            ))}
          </div>
        </div>
        <div className="flex h-[25px] flex-col border-y border-l border-black bg-[#161616]">
          <div className="flex h-[19px]">
            <span className="mr-px ml-[2px] w-[6px] rounded-l-md bg-[#2d8ceb]" />
            <span className="flex-1 bg-[#626262]" />
          </div>
          <div className="mt-[2px] ml-[9px] h-[2px] bg-[#12b41c]" />
        </div>
        <div className="flex flex-1 flex-col border-l border-black bg-[#323232]">
          {layers.map((layer) => (
            <div
              key={layer.id}
              className={`h-6 border-b border-[#282828] pr-px pl-[9px] ${layer.selected ? "bg-[#454545]" : ""}`}
            >
              <div
                className={
                  layer.selected
                    ? "h-[22px] border-t border-b-2 border-t-[#dba8a6] border-b-[#7a5050] bg-linear-to-b from-[#b04b4a] to-[#984140]"
                    : "h-[22px] border-y border-[#5a4343] bg-[#7a3a3a]"
                }
              />
            </div>
          ))}
        </div>
        <div className="flex h-[22px] shrink-0 items-center border-t border-black pl-2">
          <MountainIcon />
          <input
            type="range"
            aria-label="タイムラインのズーム"
            defaultValue={100}
            className="mr-[14px] ml-5 h-3 w-[55px] appearance-none bg-transparent [&::-webkit-slider-runnable-track]:h-[2px] [&::-webkit-slider-runnable-track]:bg-[#484848] [&::-webkit-slider-thumb]:-mt-[5px] [&::-webkit-slider-thumb]:h-3 [&::-webkit-slider-thumb]:w-3 [&::-webkit-slider-thumb]:appearance-none [&::-webkit-slider-thumb]:rounded-full [&::-webkit-slider-thumb]:border-2 [&::-webkit-slider-thumb]:border-[#9d9d9d] [&::-webkit-slider-thumb]:bg-[#232323]"
          />
          <MountainIcon big />
          <div className="ml-[5px] h-full flex-1 bg-[#1c1c1c] pl-px">
            <div className="h-[19px] w-[31px] rounded-full bg-[#323232]" />
          </div>
        </div>

        {/* current time indicator */}
        <div className="absolute top-7 bottom-[22px] left-[3px] flex w-[15px] flex-col items-center">
          <Svg w={15} h={17} className="text-[#2d8ceb]">
            <path d="M1 0h13v8l-6.500 9L1 8z" fill="currentColor" stroke="none" />
            <path d="M7.500 8v9" stroke="#232323" />
          </Svg>
          <span className="w-px flex-1 bg-[#2d8ceb]" />
        </div>
      </div>
      <div className="flex w-5 shrink-0 flex-col items-end pt-[48px] text-[#b4b4b4]">
        <Svg w={16} h={19}>
          <path d="M1 1h15v11l-7.500 7L1 12z" fill="currentColor" stroke="none" />
        </Svg>
        <Svg w={19} h={18} className="mt-[7px]">
          <path d="M10 4h9v9h-9z" fill="#9d9d9d" stroke="none" />
          <path d="M9 1 1 10h8z" strokeWidth="1.300" />
          <circle cx="9" cy="11" r="4" fill="#232323" strokeWidth="1.600" />
        </Svg>
      </div>
    </div>
  );
}

function Timeline() {
  return (
    <section className="mt-[6px] flex shrink-0 flex-col bg-[#232323]">
      <TimelineTabs />
      <div className="flex">
        <div className="flex min-w-0 flex-1 flex-col">
          <TimelineToolbar />
          <LayerTable />
          <div className="min-h-[61px] flex-1" />
          <LayerFooter />
        </div>
        <TimeGraph />
      </div>
    </section>
  );
}

export default function App() {
  return (
    <div
      lang="ja"
      className="flex min-h-screen flex-col bg-[#161616] font-['Noto_Sans','Noto_Sans_CJK_JP',sans-serif] [font-feature-settings:'palt']"
    >
      <TopBar />
      <main className="mt-1 flex flex-1 gap-[6px]">
        <EffectControls />
        <Viewer />
        <SidePanels />
      </main>
      <Timeline />
    </div>
  );
}
